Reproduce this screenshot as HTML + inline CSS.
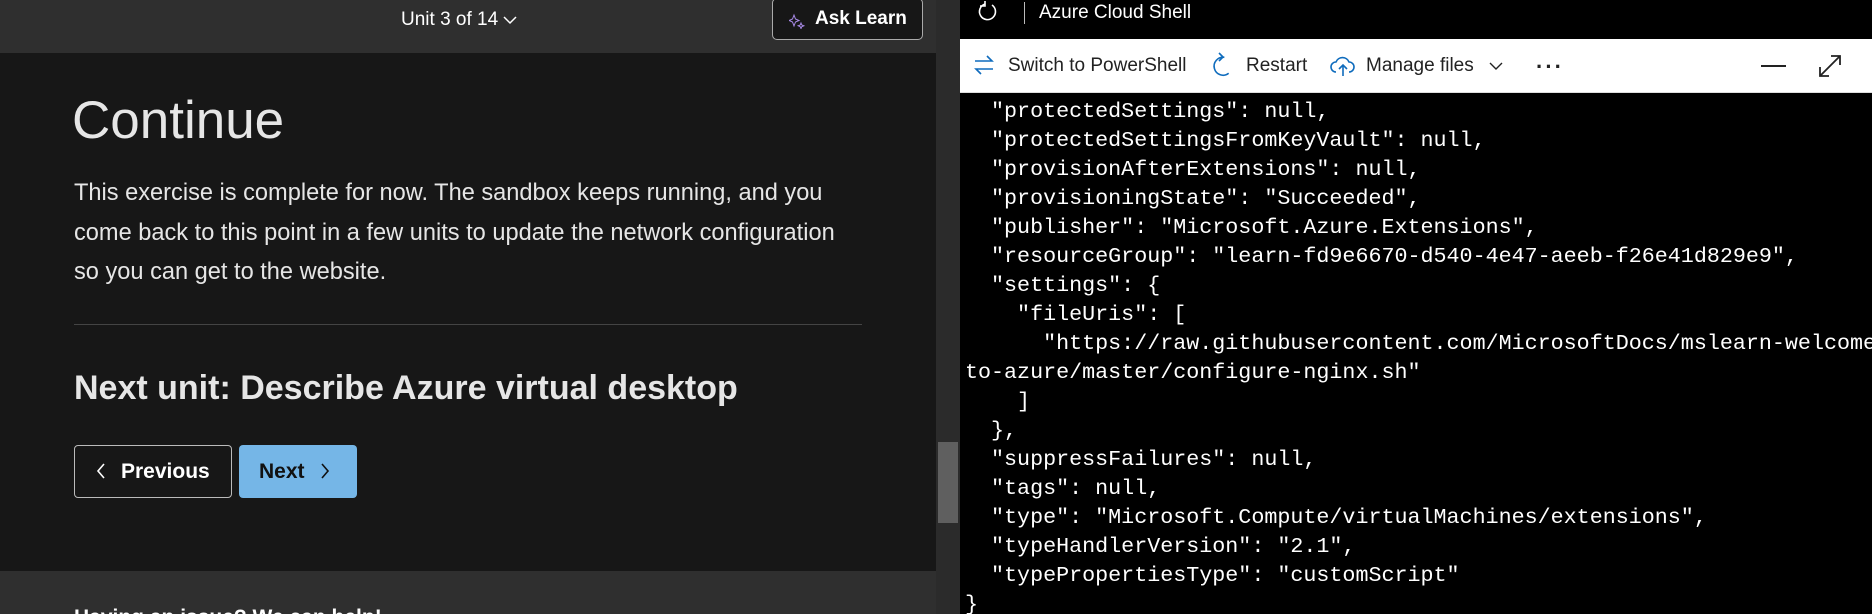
<!DOCTYPE html>
<html><head><meta charset="utf-8"><style>
*{margin:0;padding:0;box-sizing:border-box}
html,body{width:1872px;height:614px;overflow:hidden}
body{background:#000;font-family:"Liberation Sans",sans-serif;position:relative}
.abs{position:absolute}
#left{left:0;top:0;width:936px;height:614px;background:#171717}
#top{left:0;top:0;width:936px;height:53px;background:#2f2f2f}
#foot{left:0;top:571px;width:936px;height:43px;background:#2f2f2f}
.mono{font-family:"Liberation Mono",monospace;font-size:21.7px;color:#fff;white-space:pre;line-height:29px}
</style></head><body>
<div id="left" class="abs"></div>
<div id="top" class="abs"></div>
<div class="abs" style="left:401px;top:7px;color:#fff;font-size:19px;line-height:26px">Unit 3 of 14 <svg width="14" height="10" viewBox="0 0 14 10"><path d="M1 2l6 6 6-6" stroke="#fff" stroke-width="1.5" fill="none"/></svg></div>
<div class="abs" style="left:772px;top:-2px;width:151px;height:42px;border:1px solid #aaa;border-radius:5px;background:#171717;color:#fff;font-size:19px;line-height:40px;padding-left:42px;font-weight:bold">Ask Learn</div>
<svg class="abs" style="left:789px;top:13px" width="16" height="16" viewBox="0 0 16 16"><path d="M5 2l1.5 4L10 7.5 6.5 9 5 13 3.5 9 0 7.5 3.5 6z M12 10l.8 2 2 .8-2 .8-.8 2-.8-2-2-.8 2-.8z" fill="none" stroke="#a98be8" stroke-width="1"/></svg>
<div class="abs" style="left:72px;top:89px;color:#e6e6e6;font-size:53px;line-height:64px">Continue</div>
<div class="abs" style="left:74px;top:174px;width:820px;color:#e6e6e6;font-size:23.6px;line-height:39.5px;white-space:nowrap">This exercise is complete for now. The sandbox keeps running, and you<br>come back to this point in a few units to update the network configuration<br>so you can get to the website.</div>
<div class="abs" style="left:74px;top:324px;width:788px;height:1px;background:#444"></div>
<div class="abs" style="left:74px;top:367px;color:#e6e6e6;font-size:34px;font-weight:bold;line-height:42px;white-space:nowrap">Next unit: Describe Azure virtual desktop</div>
<div class="abs" style="left:74px;top:445px;width:158px;height:53px;border:1px solid #bbb;border-radius:4px;color:#fff;font-size:21px;font-weight:bold;line-height:51px;padding-left:46px">Previous</div>
<svg class="abs" style="left:96px;top:463px" width="10" height="16" viewBox="0 0 10 16"><path d="M8 1L2 8l6 7" stroke="#fff" stroke-width="1.6" fill="none"/></svg>
<div class="abs" style="left:239px;top:445px;width:118px;height:53px;border-radius:4px;background:#75b6e7;color:#111;font-size:21px;font-weight:bold;line-height:53px;padding-left:20px">Next</div>
<svg class="abs" style="left:320px;top:463px" width="10" height="16" viewBox="0 0 10 16"><path d="M2 1l6 7-6 7" stroke="#111" stroke-width="1.6" fill="none"/></svg>
<div id="foot" class="abs"></div>
<div class="abs" style="left:74px;top:606px;color:#fff;font-size:21px;font-weight:bold;line-height:24px">Having an issue? We can help!</div>
<div class="abs" style="left:936px;top:0;width:24px;height:614px;background:#2b2b2b"></div>
<div class="abs" style="left:938px;top:442px;width:20px;height:81px;background:#5f5f5f"></div>
<!-- shell -->
<div class="abs" style="left:960px;top:0;width:912px;height:614px;background:#000"></div>
<svg class="abs" style="left:977px;top:1px" width="22" height="22" viewBox="0 0 22 22"><path d="M8 3A8 8 0 1 0 15 4" stroke="#fff" stroke-width="1.6" fill="none"/><path d="M8 0v5h-5" stroke="#fff" stroke-width="1.6" fill="none"/></svg>
<div class="abs" style="left:1024px;top:2px;width:1px;height:22px;background:#bbb"></div>
<div class="abs" style="left:1039px;top:0;color:#fff;font-size:19px;line-height:26px">Azure Cloud Shell</div>
<div class="abs" style="left:960px;top:39px;width:912px;height:54px;background:#fff;border-bottom:1px solid #ddd"></div>
<svg class="abs" style="left:973px;top:54px" width="22" height="22" viewBox="0 0 22 22"><path d="M2 7h17l-5-5M20 15H3l5 5" stroke="#0f6cbd" stroke-width="1.6" fill="none"/></svg>
<div class="abs" style="left:1008px;top:53px;color:#222;font-size:19px;line-height:26px">Switch to PowerShell</div>
<svg class="abs" style="left:1211px;top:52px" width="22" height="26" viewBox="0 0 22 26"><path d="M12 5A9 9 0 1 0 19 20" stroke="#0f6cbd" stroke-width="1.6" fill="none" transform="rotate(10 11 13)"/><path d="M8 1l4 4-4 4" stroke="#0f6cbd" stroke-width="1.6" fill="none"/></svg>
<div class="abs" style="left:1246px;top:53px;color:#222;font-size:19px;line-height:26px">Restart</div>
<svg class="abs" style="left:1330px;top:54px" width="26" height="24" viewBox="0 0 26 24"><path d="M6 18a5 5 0 0 1 0-10 7 7 0 0 1 13 0 5 5 0 0 1 0 10" stroke="#0f6cbd" stroke-width="1.6" fill="none"/><path d="M13 22v-10M9 15l4-4 4 4" stroke="#0f6cbd" stroke-width="1.6" fill="none"/></svg>
<div class="abs" style="left:1366px;top:53px;color:#222;font-size:19px;line-height:26px">Manage files</div>
<svg class="abs" style="left:1489px;top:61px" width="14" height="10" viewBox="0 0 14 10"><path d="M1 2l6 6 6-6" stroke="#222" stroke-width="1.4" fill="none"/></svg>
<div class="abs" style="left:1536px;top:54px;color:#222;font-size:22px;line-height:26px;letter-spacing:2px;font-weight:bold">···</div>
<div class="abs" style="left:1761px;top:65px;width:25px;height:2px;background:#222"></div>
<svg class="abs" style="left:1817px;top:53px" width="26" height="26" viewBox="0 0 26 26"><path d="M3 23L23 3M14 3h9v9M3 14v9h9" stroke="#222" stroke-width="1.8" fill="none"/></svg>
<div class="abs mono" style="left:965px;top:97px">  "protectedSettings": null,
  "protectedSettingsFromKeyVault": null,
  "provisionAfterExtensions": null,
  "provisioningState": "Succeeded",
  "publisher": "Microsoft.Azure.Extensions",
  "resourceGroup": "learn-fd9e6670-d540-4e47-aeeb-f26e41d829e9",
  "settings": {
    "fileUris": [
      "https://raw.githubusercontent.com/MicrosoftDocs/mslearn-welcome-
to-azure/master/configure-nginx.sh"
    ]
  },
  "suppressFailures": null,
  "tags": null,
  "type": "Microsoft.Compute/virtualMachines/extensions",
  "typeHandlerVersion": "2.1",
  "typePropertiesType": "customScript"
}</div>
</body></html>
